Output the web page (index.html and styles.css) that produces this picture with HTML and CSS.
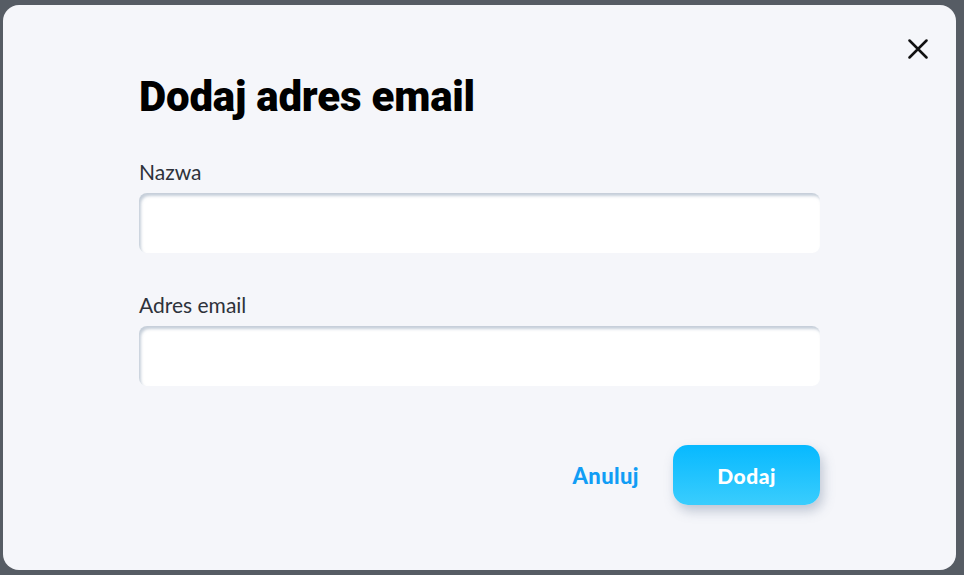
FILE: index.html
```html
<!DOCTYPE html>
<html lang="pl">
<head>
<meta charset="utf-8">
<title>Dodaj adres email</title>
<link rel="stylesheet" href="styles.css">
</head>
<body>
<div class="page"></div>
<div class="overlay">
  <div class="modal" role="dialog" aria-labelledby="modal-title">
    <button class="close" aria-label="Zamknij">
      <svg width="20" height="20" viewBox="0 0 20 20"><path d="M1.5 1.5 L18.5 18.5 M18.5 1.5 L1.5 18.5" stroke="#111" stroke-width="2.5" stroke-linecap="round"/></svg>
    </button>
    <div class="content">
      <h1 id="modal-title" class="title">Dodaj adres email</h1>
      <label class="field">
        <span class="label">Nazwa</span>
        <input class="input" type="text">
      </label>
      <label class="field">
        <span class="label">Adres email</span>
        <input class="input" type="email">
      </label>
      <div class="actions">
        <button class="btn-link">Anuluj</button>
        <button class="btn-primary">Dodaj</button>
      </div>
    </div>
  </div>
</div>
</body>
</html>
```
FILE: styles.css
```css
* { box-sizing: border-box; }
html, body { margin: 0; height: 100%; }
body {
  font-family: "Lato", "Noto Sans", sans-serif;
  background: #f5f6fa;
  overflow: hidden;
}
.page { height: 100%; }
.overlay {
  position: fixed;
  inset: 0;
  background: rgba(25, 32, 42, 0.72);
  padding: 5px 8px 5px 3px;
  display: flex;
}
.modal {
  flex: 1;
  position: relative;
  background: #f5f6fa;
  border-radius: 16px;
  padding: 64px 136px 0 136px;
}
.close {
  position: absolute;
  top: 32px;
  right: 26px;
  width: 24px;
  height: 24px;
  border: 0;
  padding: 0;
  background: transparent;
  cursor: pointer;
  display: flex;
  align-items: center;
  justify-content: center;
}
.content { display: flex; flex-direction: column; }
.title {
  margin: 0 0 34px 0;
  font-family: "Roboto", "Lato", sans-serif;
  font-size: 42px;
  line-height: 56px;
  font-weight: 900;
  color: #000;
  letter-spacing: -0.2px;
}
.field { display: flex; flex-direction: column; margin-bottom: 39px; }
.label {
  font-size: 21px;
  line-height: 26px;
  color: #2e323a;
  margin-bottom: 8px;
}
.input {
  height: 60px;
  width: 100%;
  border: 0;
  border-radius: 8px;
  background: #fff;
  box-shadow: inset 2px 3px 3px rgba(150, 165, 185, 0.55);
  font: inherit;
  font-size: 20px;
  padding: 0 16px;
  outline: none;
}
.actions {
  display: flex;
  justify-content: flex-end;
  align-items: center;
  gap: 34px;
  margin-top: 20px;
}
.btn-link {
  border: 0;
  background: transparent;
  font: inherit;
  font-size: 22px;
  font-weight: 900;
  color: #119df5;
  letter-spacing: 0.4px;
  cursor: pointer;
  padding: 0;
}
.btn-primary {
  width: 147px;
  height: 60px;
  border: 0;
  border-radius: 15px;
  background: linear-gradient(180deg, #07b9ff 0%, #3acdfd 100%);
  box-shadow: 3px 6px 12px rgba(90, 110, 140, 0.35);
  color: #fff;
  font: inherit;
  font-size: 21px;
  font-weight: 900;
  letter-spacing: 0.5px;
  cursor: pointer;
}
```
